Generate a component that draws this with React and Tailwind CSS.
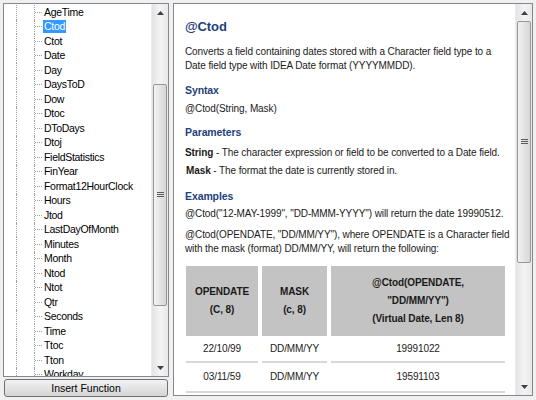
import React from "react";

const functions = [
    "AgeTime", "Ctod", "Ctot", "Date", "Day", "DaysToD", "Dow", "Dtoc", "DToDays",
    "Dtoj", "FieldStatistics", "FinYear", "Format12HourClock", "Hours", "Jtod",
    "LastDayOfMonth", "Minutes", "Month", "Ntod", "Ntot", "Qtr", "Seconds", "Time",
    "Ttoc", "Tton", "Workday",
];

const font = { fontFamily: '"Liberation Sans", Arial, sans-serif' };

function Arrow({ down }) {
    return (
        <div className="h-[17px] flex items-center justify-center">
            <svg width="7" height="4" viewBox="0 0 7 4">
                {down ? (
                    <path d="M0 0h7L3.5 4z" fill="#404040" />
                ) : (
                    <path d="M0 4h7L3.5 0z" fill="#404040" />
                )}
            </svg>
        </div>
    );
}

function ScrollBar({ offset, size }) {
    return (
        <div className="w-[17px] flex flex-col bg-gradient-to-r from-[#e3e3e3] via-[#f4f4f4] to-[#e8e8e8] border-l border-[#ececec]">
            <Arrow />
            <div className="flex-1 flex flex-col">
                <div style={{ height: offset }} />
                <div
                    className="mx-px rounded-[2px] border border-[#979797] bg-gradient-to-r from-[#f2f2f2] to-[#d6d6d6] flex items-center justify-center"
                    style={{ height: size }}
                >
                    <svg width="7" height="6" viewBox="0 0 7 6">
                        <path d="M0 0.5h7M0 2.5h7M0 4.5h7" stroke="#5a5a5a" strokeWidth="1" />
                    </svg>
                </div>
            </div>
            <Arrow down />
        </div>
    );
}

function TreeRow({ name, selected }) {
    return (
        <div className="relative h-[14.5px] flex items-center">
            <div className="absolute left-[12px] top-0 bottom-0 border-l border-dotted border-[#a0a0a0]" />
            <div className="absolute left-[30px] top-0 bottom-0 border-l border-dotted border-[#a0a0a0]" />
            <div className="ml-[31px] w-[7px] border-t border-dotted border-[#a0a0a0]" />
            <span
                className={
                    "ml-[1px] px-[1px] leading-[13px] text-[10.5px] tracking-[-0.3px] " +
                    (selected ? "bg-[#3399ff] text-white" : "text-black")
                }
            >
                {name}
            </span>
        </div>
    );
}

function Heading({ children, className }) {
    return <div className={"font-bold text-[10.5px] leading-[14px] text-[#1f3f7c] " + className}>{children}</div>;
}

export default function App() {
    return (
        <div className="w-[536px] h-[400px] bg-[#f0f0f0] flex pt-[3px] overflow-hidden" style={font}>
            <div className="ml-[3px] w-[166px] flex flex-col">
                <div className="h-[374px] border border-[#828790] bg-white flex">
                    <div className="flex-1 overflow-hidden pt-[1px]">
                        {functions.map((f) => (
                            <TreeRow key={f} name={f} selected={f === "Ctod"} />
                        ))}
                    </div>
                    <ScrollBar offset={63} size={222} />
                </div>
                <button className="mt-[2px] mx-[1px] h-[18px] rounded-[3px] border border-[#707070] bg-gradient-to-b from-[#f2f2f2] to-[#d5d5d5] text-[10.5px] text-black leading-none">
                    Insert Function
                </button>
            </div>
            <div className="ml-[4px] w-[360px] h-[393px] border border-[#828790] bg-white flex">
                <div className="flex-1 overflow-hidden pl-[11px] pr-[2px] text-[10px] leading-[14px] tracking-[-0.1px] text-[#1a1a1a]">
                    <div className="mt-[15px] font-bold text-[13px] leading-[16px] text-[#1f3f7c]">@Ctod</div>
                    <p className="mt-[10px] w-[318px]">
                        Converts a field containing dates stored with a Character field type to a Date field type with IDEA Date format (YYYYMMDD).
                    </p>
                    <Heading className="mt-[10px]">Syntax</Heading>
                    <p className="mt-[5px]">@Ctod(String, Mask)</p>
                    <Heading className="mt-[9px]">Parameters</Heading>
                    <p className="mt-[7px] whitespace-nowrap"><b>String</b> - The character expression or field to be converted to a Date field.</p>
                    <p className="mt-[4px] ml-[1px]"><b>Mask</b> - The format the date is currently stored in.</p>
                    <Heading className="mt-[11px]">Examples</Heading>
                    <p className="mt-[4px] whitespace-nowrap">@Ctod("12-MAY-1999", "DD-MMM-YYYY") will return the date 19990512.</p>
                    <p className="mt-[7px] whitespace-nowrap">
                        @Ctod(OPENDATE, "DD/MM/YY"), where OPENDATE is a Character field
                        <br />
                        with the mask (format) DD/MM/YY, will return the following:
                    </p>
                    <div className="mt-[10px] ml-[1px] w-[319px] border-b-2 border-[#d8d8d8] pb-[1px]">
                        <div className="grid grid-cols-[72px_65px_174px] gap-x-[4px] font-bold leading-[18px] text-center">
                            <div className="h-[70px] bg-[#c3c3c3] flex flex-col justify-center">
                                <div>OPENDATE</div>
                                <div>(C, 8)</div>
                            </div>
                            <div className="h-[70px] bg-[#c3c3c3] flex flex-col justify-center">
                                <div>MASK</div>
                                <div>(c, 8)</div>
                            </div>
                            <div className="h-[70px] bg-[#c3c3c3] flex flex-col justify-center">
                                <div>@Ctod(OPENDATE,</div>
                                <div>"DD/MM/YY")</div>
                                <div>(Virtual Date, Len 8)</div>
                            </div>
                        </div>
                        {[["22/10/99", "DD/MM/YY", "19991022"], ["03/11/59", "DD/MM/YY", "19591103"]].map((r, i) => (
                            <div key={i} className="grid grid-cols-[72px_65px_174px] gap-x-[4px] text-center">
                                {r.map((c, j) => (
                                    <div
                                        key={j}
                                        className={
                                            "h-[27px] flex items-center justify-center " +
                                            (i === 0 ? "border-b-2 border-[#d8d8d8]" : "")
                                        }
                                    >
                                        {c}
                                    </div>
                                ))}
                            </div>
                        ))}
                    </div>
                </div>
                <ScrollBar offset={0} size={242} />
            </div>
        </div>
    );
}
